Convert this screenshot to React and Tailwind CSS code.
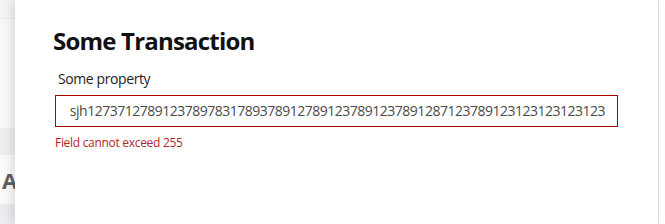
export default function App() {
  const value =
    "asdfghsjh127371278912378978317893789127891237891237891287123789123123123123123";
  return (
    <div
      className="flex h-[224px] w-[665px] overflow-hidden bg-white"
      style={{ fontFamily: '"Open Sans", "Noto Sans", sans-serif' }}
    >
      {/* background page strip */}
      <div className="flex w-[15px] shrink-0 flex-col overflow-hidden">
        <div className="h-[19px] border-b border-[#ececec] bg-[#f5f5f5]" />
        <div className="h-[109px] bg-[#f8f8f8]" />
        <div className="h-[27px] bg-[#efefef]" />
        <div className="flex h-[49px] items-center bg-[#fafafa] pl-[2px]">
          <span className="text-[22px] font-bold leading-none text-[#5f5f5f]">A</span>
        </div>
        <div className="flex-1 bg-[#ececf1]" />
      </div>

      {/* panel */}
      <div className="relative flex flex-1 flex-col bg-white pl-[38px] pt-[25px] shadow-[-3px_0_10px_rgba(0,0,0,0.13)]">
        <h1 className="text-[24px] font-bold leading-[32px] tracking-[-0.8px] text-[#111]">
          Some Transaction
        </h1>
        <label className="mt-[12px] pl-[5px] text-[14px] leading-[20px] tracking-[-0.4px] text-[#222]">
          Some property
        </label>
        <div className="ml-[2px] mt-[6px] flex h-[32px] w-[563px] items-center border border-[#a80000] pl-[14px] pr-[12px]">
          <div className="flex flex-1 justify-end overflow-hidden whitespace-nowrap">
            <span className="text-[14px] leading-[30px] tracking-[-0.5px] text-[#4a4a4a]">{value}</span>
          </div>
        </div>
        <div className="ml-[2px] mt-[8px] text-[12px] leading-[16px] tracking-[-0.3px] text-[#b4262c]">
          Field cannot exceed 255
        </div>
      </div>

      {/* right edge */}
      <div className="w-[7px] shrink-0 border-l-[1.5px] border-[#e3e3e3] bg-white" />
    </div>
  );
}
